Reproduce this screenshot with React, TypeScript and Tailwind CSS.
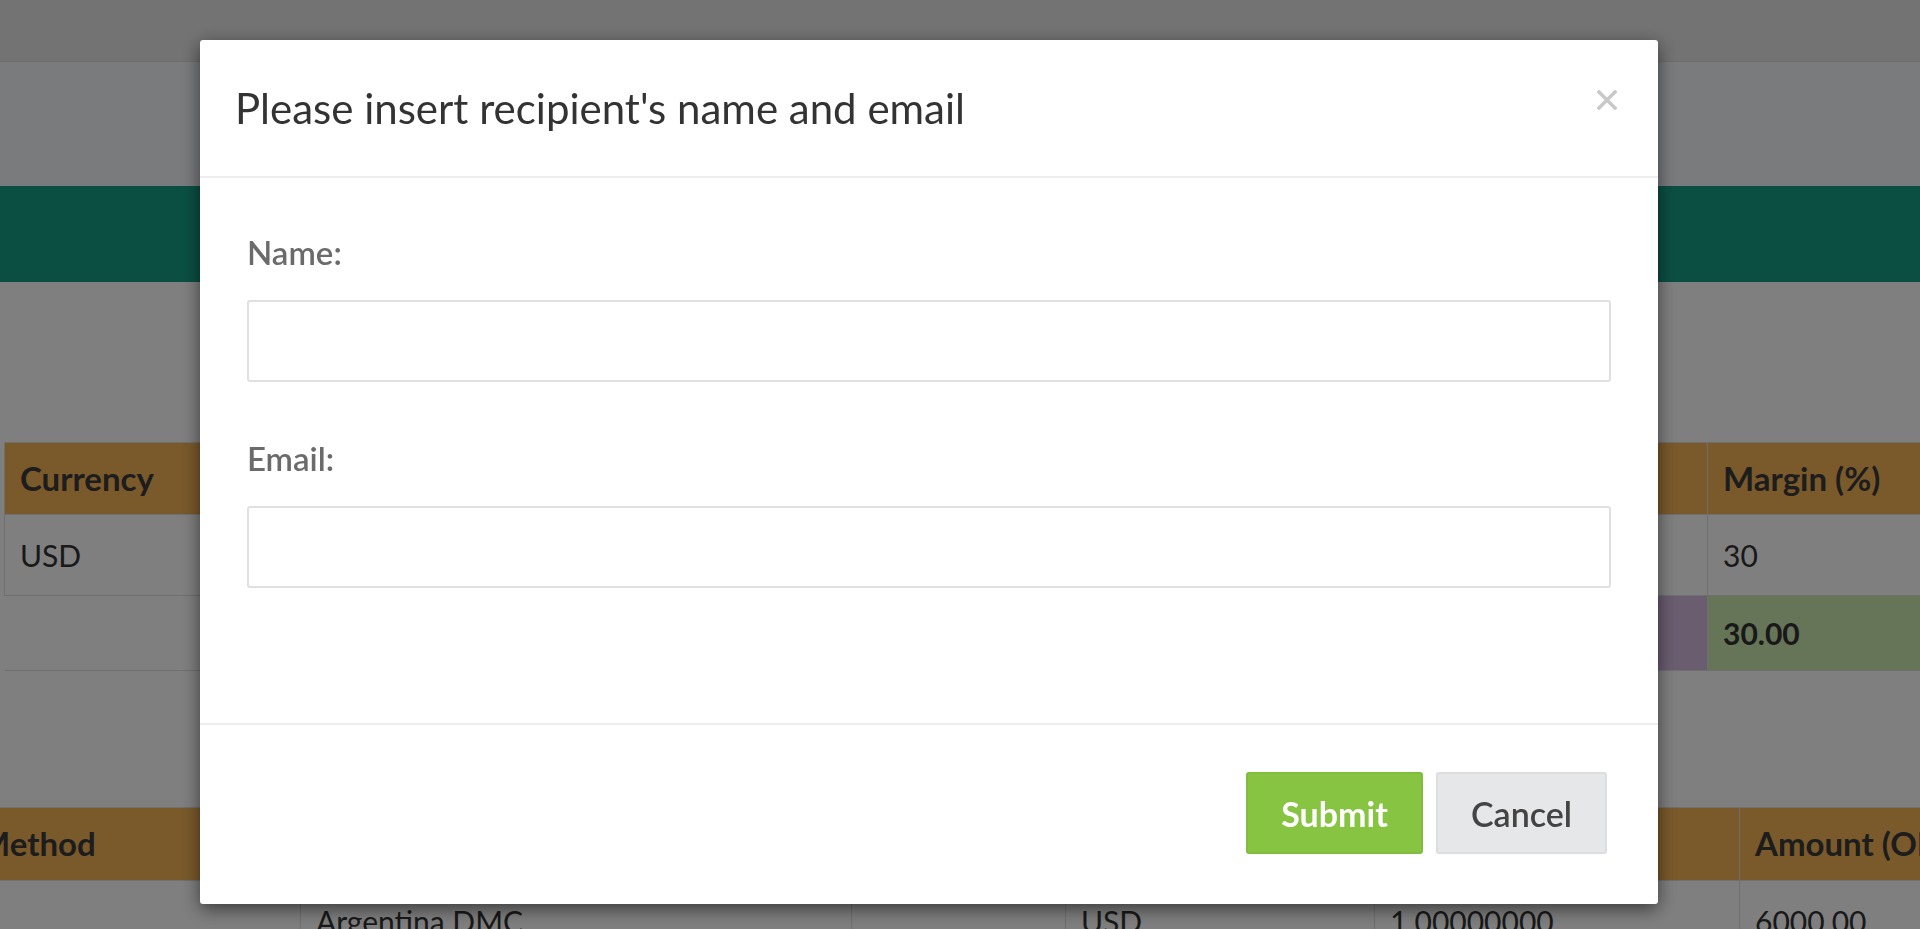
import React from "react";

const Th = ({ children, className = "" }: { children?: React.ReactNode; className?: string }) => (
  <th className={`border border-[#dfdfdf] px-[15px] text-left text-[33px] font-bold text-[#3a3a3a] ${className}`}>{children}</th>
);

const Td = ({ children, className = "" }: { children?: React.ReactNode; className?: string }) => (
  <td className={`border border-[#dfdfdf] px-[15px] text-left text-[#333] ${className}`}>{children}</td>
);

const Page = () => (
  <div className="w-full h-[929px] overflow-hidden bg-white text-[30px] font-['Lato',sans-serif]">
    <div className="h-[62px] bg-[#e6e6e6] border-b border-[#dadada]" />
    <div className="h-[124px] bg-[#f4f6fa]" />
    <div className="h-[96px] bg-[#179e86]" />
    <div className="h-[160px]" />

    <table className="table-fixed border-collapse ml-[4px] w-[2003px]">
      <colgroup>
        <col className="w-[396px]" />
        <col className="w-[400px]" />
        <col className="w-[500px]" />
        <col className="w-[407px]" />
        <col className="w-[300px]" />
      </colgroup>
      <thead>
        <tr className="h-[72px] bg-[#f5b457]">
          <Th>Currency</Th>
          <Th />
          <Th />
          <Th />
          <Th>Margin (%)</Th>
        </tr>
      </thead>
      <tbody>
        <tr className="h-[81px]">
          <Td>USD</Td>
          <Td />
          <Td />
          <Td />
          <Td>30</Td>
        </tr>
        <tr className="h-[75px]">
          <Td className="border-l-0" />
          <Td />
          <Td />
          <Td className="bg-[#d4bae0]" />
          <Td className="bg-[#cce9b0] font-bold">30.00</Td>
        </tr>
      </tbody>
    </table>

    <div className="h-[136px]" />

    <table className="table-fixed border-collapse ml-[-37px] w-[2076px]">
      <colgroup>
        <col className="w-[337px]" />
        <col className="w-[551px]" />
        <col className="w-[214px]" />
        <col className="w-[309px]" />
        <col className="w-[365px]" />
        <col className="w-[300px]" />
      </colgroup>
      <thead>
        <tr className="h-[73px] bg-[#f5b457]">
          <Th>Method</Th>
          <Th />
          <Th />
          <Th />
          <Th />
          <Th>Amount (OR)</Th>
        </tr>
      </thead>
      <tbody>
        <tr className="h-[81px]">
          <Td />
          <Td>Argentina DMC</Td>
          <Td />
          <Td>USD</Td>
          <Td>1.00000000</Td>
          <Td>6000.00</Td>
        </tr>
      </tbody>
    </table>
  </div>
);

const Modal = () => (
  <div className="fixed inset-0 bg-black/50 font-['Lato',sans-serif]">
    <div className="ml-[200px] mt-[40px] w-[1458px] h-[864px] bg-white rounded-[3px] shadow-[0_5px_18px_rgba(0,0,0,0.55)] flex flex-col">
      <div className="h-[138px] shrink-0 border-b-2 border-[#eeeeee] pl-[35px] pr-[41px] flex items-start justify-between">
        <h4 className="mt-[43px] text-[42px] leading-[50px] text-[#333]">Please insert recipient's name and email</h4>
        <button className="mt-[50px] w-[20px] h-[20px]" aria-label="Close">
          <svg viewBox="0 0 20 20" className="w-[20px] h-[20px]">
            <path d="M2 2 L18 18 M18 2 L2 18" stroke="#c9c9c9" strokeWidth="3.5" strokeLinecap="square" />
          </svg>
        </button>
      </div>

      <div className="h-[545px] shrink-0 px-[47px] pt-[54px]">
        <label className="block text-[33px] leading-[40px] text-[#6b6b6b] font-semibold mb-[28px]">Name:</label>
        <input className="block w-full h-[82px] border-2 border-[#e0e0e0] rounded-[3px] px-[18px] text-[30px] outline-none" />
        <label className="block mt-[56px] text-[33px] leading-[40px] text-[#6b6b6b] font-semibold mb-[28px]">Email:</label>
        <input className="block w-full h-[82px] border-2 border-[#e0e0e0] rounded-[3px] px-[18px] text-[30px] outline-none" />
      </div>

      <div className="flex-1 border-t-2 border-[#eeeeee] pr-[51px] pt-[47px] flex justify-end items-start gap-[13px]">
        <button className="w-[177px] h-[82px] bg-[#87c441] border-2 border-[#80bd3c] rounded-[3px] text-white font-bold text-[34px]">Submit</button>
        <button className="w-[171px] h-[82px] bg-[#e6e7e9] border-2 border-[#dcdddf] rounded-[3px] text-[#444] font-semibold text-[34px]">Cancel</button>
      </div>
    </div>
  </div>
);

export default function App() {
  return (
    <div className="relative">
      <Page />
      <Modal />
    </div>
  );
}
